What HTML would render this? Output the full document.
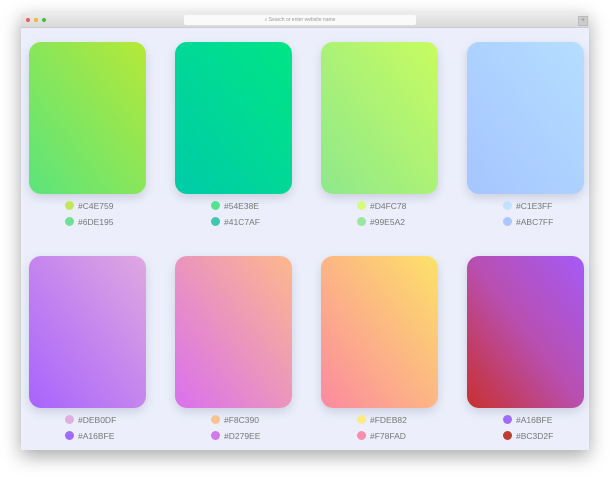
<!DOCTYPE html><html><head><style>
body{margin:0;width:610px;height:481px;background:#fff;position:relative;overflow:hidden;font-family:"Liberation Sans",sans-serif}
.win{position:absolute;left:21px;top:13px;width:568px;height:437px;background:#eceffb;box-shadow:0 6px 18px rgba(0,0,0,.35)}
.bar{height:14px;background:linear-gradient(#ececec,#d9d9d9);border-bottom:1px solid #ccc;position:relative}
.d{position:absolute;top:5px;width:4px;height:4px;border-radius:50%}
.url{position:absolute;left:163px;top:2px;width:232px;height:10px;background:#fafafa;border-radius:2px;font-size:5px;color:#999;text-align:center;line-height:10px}
.plus{position:absolute;right:1px;top:3px;width:8px;height:8px;background:#ccc;border:1px solid #bbb;font-size:7px;line-height:8px;text-align:center;color:#888}
.c{position:absolute;width:117px;height:152px;border-radius:12px;box-shadow:0 4px 10px rgba(80,80,120,.2)}
.l{position:absolute;font-size:8.5px;color:#777;height:10px;line-height:10px}
.l i{position:absolute;left:-13px;top:0px;width:9px;height:9px;border-radius:50%}
</style></head><body>
<div class="win"><div class="bar"><span class="d" style="left:5px;background:#ee5b55"></span><span class="d" style="left:13px;background:#f2b534"></span><span class="d" style="left:21px;background:#3fc23c"></span><div class="url">⌕ Search or enter website name</div><div class="plus">+</div></div></div>
<div class="c" style="left:29px;top:42px;background:linear-gradient(to bottom left,#b6e838,#5be47c)"></div>
<div class="c" style="left:175px;top:42px;background:linear-gradient(to bottom left,#00e585,#00cba8)"></div>
<div class="c" style="left:321px;top:42px;background:linear-gradient(to bottom left,#c8fc60,#8ee88c)"></div>
<div class="c" style="left:467px;top:42px;background:linear-gradient(to bottom left,#b5deff,#a5c5ff)"></div>
<div class="c" style="left:29px;top:256px;background:linear-gradient(to bottom left,#e0a8e0,#a863fd)"></div>
<div class="c" style="left:175px;top:256px;background:linear-gradient(to bottom left,#fcb98c,#da70ef)"></div>
<div class="c" style="left:321px;top:256px;background:linear-gradient(to bottom left,#fde268,#fb8aa0)"></div>
<div class="c" style="left:467px;top:256px;background:linear-gradient(to bottom left,#a55af7,#b84fb0 50%,#c8302f)"></div>
<div class="l" style="left:78px;top:201px"><i style="background:#C4E759"></i>#C4E759</div>
<div class="l" style="left:78px;top:217px"><i style="background:#6DE195"></i>#6DE195</div>
<div class="l" style="left:224px;top:201px"><i style="background:#54E38E"></i>#54E38E</div>
<div class="l" style="left:224px;top:217px"><i style="background:#41C7AF"></i>#41C7AF</div>
<div class="l" style="left:370px;top:201px"><i style="background:#D4FC78"></i>#D4FC78</div>
<div class="l" style="left:370px;top:217px"><i style="background:#99E5A2"></i>#99E5A2</div>
<div class="l" style="left:516px;top:201px"><i style="background:#C1E3FF"></i>#C1E3FF</div>
<div class="l" style="left:516px;top:217px"><i style="background:#ABC7FF"></i>#ABC7FF</div>
<div class="l" style="left:78px;top:415px"><i style="background:#DEB0DF"></i>#DEB0DF</div>
<div class="l" style="left:78px;top:431px"><i style="background:#A16BFE"></i>#A16BFE</div>
<div class="l" style="left:224px;top:415px"><i style="background:#F8C390"></i>#F8C390</div>
<div class="l" style="left:224px;top:431px"><i style="background:#D279EE"></i>#D279EE</div>
<div class="l" style="left:370px;top:415px"><i style="background:#FDEB82"></i>#FDEB82</div>
<div class="l" style="left:370px;top:431px"><i style="background:#F78FAD"></i>#F78FAD</div>
<div class="l" style="left:516px;top:415px"><i style="background:#A16BFE"></i>#A16BFE</div>
<div class="l" style="left:516px;top:431px"><i style="background:#BC3D2F"></i>#BC3D2F</div>
</body></html>
